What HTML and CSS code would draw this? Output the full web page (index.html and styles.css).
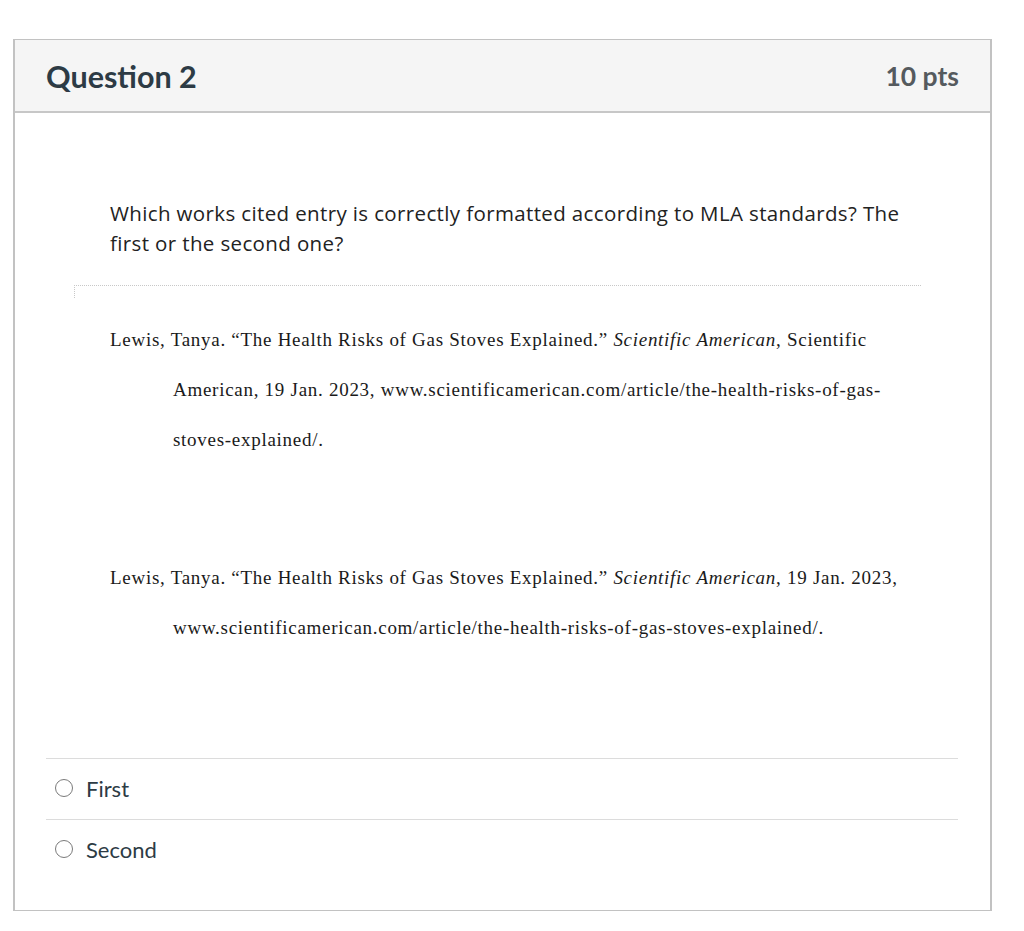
FILE: index.html
```html
<!DOCTYPE html>
<html>
<head>
<meta charset="utf-8">
<link rel="stylesheet" href="styles.css">
</head>
<body>
<div class="quiz">
  <div class="header">
    <div class="title">Question 2</div>
    <div class="pts">10 pts</div>
  </div>
  <div class="content">
    <p class="prompt">Which works cited entry is correctly formatted according to MLA standards? The<br>first or the second one?</p>
    <div class="dotted"></div>
    <div class="cite first-cite">Lewis, Tanya. “The Health Risks of Gas Stoves Explained.” <i>Scientific American</i>, Scientific<br>American, 19 Jan. 2023, www.scientificamerican.com/article/the-health-risks-of-gas-<br>stoves-explained/.</div>
    <div class="cite second-cite">Lewis, Tanya. “The Health Risks of Gas Stoves Explained.” <i>Scientific American</i>, 19 Jan. 2023,<br>www.scientificamerican.com/article/the-health-risks-of-gas-stoves-explained/.</div>
  </div>
  <div class="answers">
    <label class="answer"><span class="radio"></span><span>First</span></label>
    <label class="answer"><span class="radio"></span><span>Second</span></label>
  </div>
</div>
</body>
</html>
```

FILE: styles.css
```css
html, body {
  margin: 0;
  padding: 0;
  background: #fff;
}
body {
  padding-top: 39px;
  padding-left: 13px;
}
.quiz {
  width: 979px;
  height: 872px;
  border: 1px solid #c2c2c2;
  border-left-width: 2px;
  border-right-width: 2px;
  box-sizing: border-box;
  font-family: Lato, "Open Sans", sans-serif;
  color: #2d3b45;
}
.header {
  height: 73px;
  box-sizing: border-box;
  background: #f5f5f5;
  border-bottom: 2px solid #c7c7c7;
  display: flex;
  justify-content: space-between;
  align-items: center;
  padding: 0 31px 0 31px;
}
.title {
  font-weight: 700;
  font-size: 30.5px;
  color: #2d3b45;
}
.pts {
  font-weight: 700;
  font-size: 26.5px;
  color: #555a5e;
}
.content {
  padding: 85px 0 0 0;
}
.prompt {
  margin: 0 0 0 95px;
  width: 820px;
  font-family: "Open Sans", sans-serif;
  font-size: 20.5px;
  letter-spacing: 0.37px;
  line-height: 30px;
  color: #222;
  white-space: nowrap;
}
.dotted {
  margin: 27px 0 0 59px;
  width: 846px;
  height: 12px;
  border-top: 1px dotted #c8c8c8;
  border-left: 1px dotted #c8c8c8;
}
.cite {
  font-family: "Liberation Serif", "Times New Roman", serif;
  font-size: 19px;
  letter-spacing: 0.72px;
  line-height: 50px;
  color: #1a1a1a;
  margin-left: 95px;
  width: 820px;
  padding-left: 63px;
  text-indent: -63px;
  white-space: nowrap;
}
.first-cite {
  margin-top: 17px;
}
.second-cite {
  margin-top: 88px;
}
.answers {
  margin: 105px 32px 0 31px;
}
.answer {
  display: flex;
  align-items: center;
  height: 61px;
  box-sizing: border-box;
  padding-bottom: 2px;
  border-top: 1px solid #dcdcdc;
  font-size: 22px;
  color: #2d3b45;
}
.radio {
  width: 16px;
  height: 16px;
  border: 1.5px solid #7a7a7a;
  border-radius: 50%;
  margin: 0 13px 0 9px;
  box-sizing: content-box;
}
```
